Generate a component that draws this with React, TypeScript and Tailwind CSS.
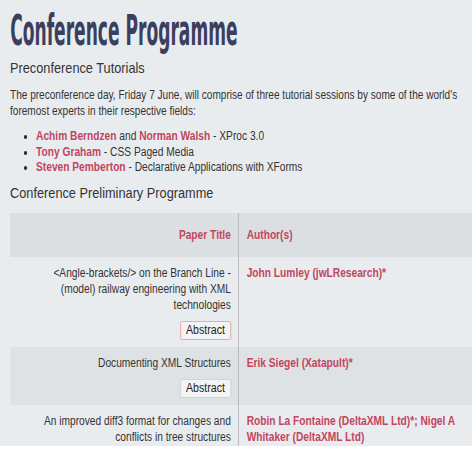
import React from "react";

const red = "text-[#c2455e] font-bold";

function Row({ title, authors, abstract, bg, focus }: { title: React.ReactNode; authors: React.ReactNode; abstract?: boolean; bg: string; focus?: boolean }) {
  return (
    <div className={`flex ${bg}`}>
      <div className="w-[269px] shrink-0 border-r border-[#b4b7ba] pl-[9.4px] pr-[8.2px] pt-[8px] pb-[7px] text-right">
        <div className="leading-[16px]">{title}</div>
        {abstract && (
          <div className="flex justify-end mt-[8px]">
            <button
              className={`h-[19px] px-[6px] text-[12.5px] leading-[16px] text-[#222] rounded-[2px] border ${
                focus ? "border-[#e2a6a6] bg-[#f3f3f3]" : "border-[#cfd1d3] bg-[#f4f4f4]"
              }`}
            >
              Abstract
            </button>
          </div>
        )}
      </div>
      <div className="flex-1 px-[9.4px] pt-[8px] leading-[16px]">{authors}</div>
    </div>
  );
}

export default function App() {
  return (
    <div className="w-[472px] h-[446px] overflow-hidden bg-[#e9ecef]">
      <div
        className="w-[555px] origin-top-left scale-x-[0.85] text-[#333] text-[12px] pl-[11.8px]"
        style={{ fontFamily: '"Liberation Sans", Arial, sans-serif' }}
      >
        <div className="pt-[10px] h-[56px]">
          <h1
            className="inline-block origin-left scale-x-[0.532] whitespace-nowrap text-[42px] leading-[42px] font-bold text-[#3b3f5c]"
            style={{ fontFamily: '"DejaVu Sans Condensed", "DejaVu Sans", sans-serif' }}
          >
            Conference Programme
          </h1>
        </div>
        <h2 className="text-[15px] leading-[20px] mt-[2px]">Preconference Tutorials</h2>
        <p className="mt-[9px] leading-[16px] text-[11.85px]">
          The preconference day, Friday 7 June, will comprise of three tutorial sessions by some of the world's foremost experts in their respective fields:
        </p>
        <ul className="mt-[10px] pl-[30.6px] list-disc leading-[15.5px]">
          <li>
            <span className={red}>Achim Berndzen</span> and <span className={red}>Norman Walsh</span> - XProc 3.0
          </li>
          <li>
            <span className={red}>Tony Graham</span> - CSS Paged Media
          </li>
          <li>
            <span className={red}>Steven Pemberton</span> - Declarative Applications with XForms
          </li>
        </ul>
        <h2 className="text-[15px] leading-[20px] mt-[7px]">Conference Preliminary Programme</h2>
        <div className="mt-[10px] w-[544px]">
          <div className="flex bg-[#dcdfe2] h-[44px] items-center">
            <div className="w-[269px] shrink-0 h-full flex items-center justify-end border-r border-[#b4b7ba] pl-[9.4px] pr-[8.2px]">
              <span className={red}>Paper Title</span>
            </div>
            <div className="px-[9.4px]">
              <span className={red}>Author(s)</span>
            </div>
          </div>
          <Row
            bg="bg-[#e9ecef]"
            focus
            abstract
            title={<>&lt;Angle-brackets/&gt; on the Branch Line - (model) railway engineering with XML technologies</>}
            authors={<span className={red}>John Lumley (jwLResearch)*</span>}
          />
          <Row
            bg="bg-[#dfe2e5]"
            abstract
            title="Documenting XML Structures"
            authors={<span className={red}>Erik Siegel (Xatapult)*</span>}
          />
          <Row
            bg="bg-[#e9ecef]"
            title="An improved diff3 format for changes and conflicts in tree structures"
            authors={<span className={red}>Robin La Fontaine (DeltaXML Ltd)*; Nigel A Whitaker (DeltaXML Ltd)</span>}
          />
        </div>
      </div>
    </div>
  );
}
